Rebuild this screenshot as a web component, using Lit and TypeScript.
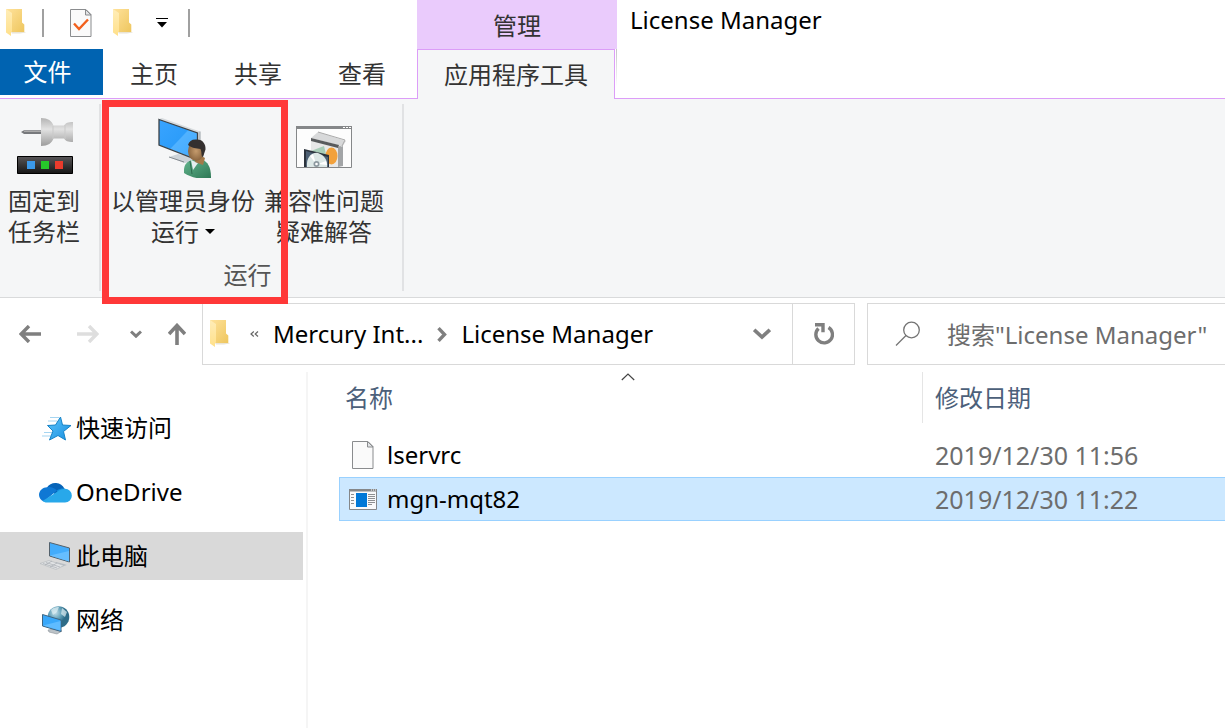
import { LitElement, html, css, svg, nothing } from "lit";
import { customElement, property, state } from "lit/decorators.js";
import { classMap } from "lit/directives/class-map.js";

const folderIcon = html`<svg width="20" height="28" viewBox="0 0 20 28" aria-hidden="true">
  <defs>
    <linearGradient id="fb" x1="0" y1="0" x2="1" y2="1"><stop offset="0" stop-color="#ffe29b"/><stop offset="1" stop-color="#eec65e"/></linearGradient>
    <linearGradient id="ff" x1="0" y1="0" x2="0" y2="1"><stop offset="0" stop-color="#ffedb8"/><stop offset="1" stop-color="#ffe08a"/></linearGradient>
  </defs>
  <path d="M5 23h14l1 .6-6 .8H6z" fill="#e9e4d6"/>
  <path d="M0 0h16v13.500l2.300 2V23H4z" fill="url(#fb)"/>
  <path d="M0 0l6 4v18.500l-1 .8V27L0 23.500z" fill="url(#ff)"/>
</svg>`;

const pageIcon = (checked: boolean) => html`<svg width="22" height="28" viewBox="0 0 22 28" aria-hidden="true">
  <path d="M.5.500h15.500l5 5v22H.5z" fill="#fafafa" stroke="#8a8c8e"/>
  <path d="M15.500.500v5.500H21z" fill="#e2e4e6" stroke="#8a8c8e"/>
  ${checked ? svg`<path d="M4 14.500l5 5.500 9-9.500" fill="none" stroke="#f2601c" stroke-width="2.400"/>` : nothing}
</svg>`;

const customizeIcon = html`<svg width="12" height="10" viewBox="0 0 12 10" aria-hidden="true">
  <path d="M0 .500h12" stroke="#000"/><path d="M1 4h10L6 9.500z" fill="#000"/>
</svg>`;

const pinIcon = html`<svg width="60" height="58" viewBox="-2 0 60 58" aria-hidden="true">
  <defs>
    <linearGradient id="pg" x1="0" y1="0" x2="0" y2="1"><stop offset="0" stop-color="#b4b4b4"/><stop offset=".4" stop-color="#e2e2e2"/><stop offset="1" stop-color="#9c9c9c"/></linearGradient>
    <linearGradient id="pb" x1="0" y1="0" x2="0" y2="1"><stop offset="0" stop-color="#585658"/><stop offset="1" stop-color="#161616"/></linearGradient>
  </defs>
  <path d="M5 14l3-1.800h18v3.800H8z" fill="#77797c"/><path d="M8 13.500h18" stroke="#aaa"/>
  <path d="M25 0c7 0 11 3 12.500 7.500H48C49.500 5 52 4 57 4v20c-5 0-7.500-1-9-3.500H37.500C36 25 32 28 25 28z" fill="url(#pg)"/>
  <path d="M37 8v13M49 7v14" stroke="#c9c9c9"/>
  <path d="M1.500 38.500h55v17h-55z" fill="url(#pb)" stroke="#000"/>
  <path d="M11 43h8v8h-8z" fill="#3b99ea"/><path d="M25 43h8v8h-8z" fill="#26c62a"/><path d="M39 43h8v8h-8z" fill="#ea3b2c"/>
</svg>`;

const adminIcon = html`<svg width="58" height="62" viewBox="-4 -2 58 62" aria-hidden="true">
  <defs>
    <linearGradient id="as" x1="0" y1="0" x2="1" y2="1"><stop offset="0" stop-color="#39a4ff"/><stop offset=".5" stop-color="#2d9dfa"/><stop offset=".52" stop-color="#51b2ff"/><stop offset="1" stop-color="#3fa9ff"/></linearGradient>
    <radialGradient id="ah"><stop offset="0" stop-color="#c59b6d"/><stop offset="1" stop-color="#8b6640"/></radialGradient>
    <linearGradient id="ag" x1="0" y1="0" x2="1" y2="1"><stop offset="0" stop-color="#63b48d"/><stop offset="1" stop-color="#2c7754"/></linearGradient>
  </defs>
  <path d="M11 39l9-3 14 3v5l-8 1z" fill="#cdd3d8"/><path d="M11 39l15 5" stroke="#858b91"/>
  <path d="M1 1l3-1 38 13.500v28L39 43z" fill="#d7dbde"/>
  <path d="M1 1.500L39.500 15v27L1 27z" fill="url(#as)" stroke="#3e4347" stroke-width="1.300"/>
  <path d="M42 13.500v28" stroke="#9aa1a7"/>
  <path d="M26 52c0-6 4-9 8-10h11c4 2 8 6 8 17v1c-9 2-19 0-27-5z" fill="url(#ag)"/>
  <path d="M33 42l2 10 5-7z" fill="#e4eef0"/><path d="M32 43l2 13" stroke="#2c6b4d"/>
  <path d="M37 44l8 3 2-7-7-4z" fill="#a37949"/>
  <ellipse cx="38" cy="33" rx="8" ry="10" fill="url(#ah)"/>
  <path d="M30 27c1-4 4-6 9-5.500 6 0 9 5 8.500 10L45 39c-2 0-1-5-2.500-8-4-.5-9-1-12.500-4z" fill="#34302f"/>
</svg>`;

const troubleshootIcon = html`<svg width="56" height="42" viewBox="0 0 56 42" aria-hidden="true">
  <path d="M.5.500h55v41H.5z" fill="#fdfdfd" stroke="#858789"/><path d="M0 0h56v3H0z" fill="#858789"/>
  <path d="M47 1h2v1h-2zM50 1h2v1h-2zM53 1h2v1h-2z" fill="#fff"/>
  <path d="M15 13l28 7v21H15z" fill="#e8e8e8"/><path d="M42 21l5-3v22l-5 1z" fill="#a3a5a7"/>
  <path d="M15 12l7-6 28 9-4 6-4-2z" fill="#d8d9da"/><path d="M15 12l28 7-1 3-27-7z" fill="#595b5d"/>
  <path d="M22 6l27 8-3 6" fill="none" stroke="#aaa"/>
  <path d="M15 25l13-5 3 12H15z" fill="#a8cdb8"/>
  <ellipse cx="35.500" cy="30" rx="6" ry="8.500" fill="#f2a13c"/>
  <path d="M8 23l25 6v12H8z" fill="#2b333d"/><path d="M10 25l22 6v10H10z" fill="#4d6074"/>
  <path d="M11 41c-1-10 5-15 11-14 6 2 10 7 9 14z" fill="#dde8e7"/>
  <path d="M20 38l-6-8 3-2zM22 38l8-3 1 4z" fill="#fff"/>
  <circle cx="20.500" cy="38" r="3" fill="#8c989f"/><circle cx="20.500" cy="38" r="1.300" fill="#fff"/>
</svg>`;

const dropIcon = html`<svg width="10" height="5" viewBox="0 0 10 5" aria-hidden="true"><path d="M0 0h10L5 5z" fill="#000"/></svg>`;

const arrowIcon = html`<svg width="22" height="18" viewBox="0 0 22 18" fill="none" stroke="currentColor" stroke-width="3.400" aria-hidden="true"><path d="M22 9H2.500M10 1L2.200 9l7.800 8"/></svg>`;
const forwardIcon = html`<svg width="22" height="18" viewBox="0 0 22 18" fill="none" stroke="currentColor" stroke-width="3.400" aria-hidden="true"><path d="M0 9h19.500M12 1l7.800 8-7.800 8"/></svg>`;
const upIcon = html`<svg width="18" height="22" viewBox="0 0 18 22" fill="none" stroke="currentColor" stroke-width="3.600" aria-hidden="true"><path d="M9 22V2.500M1 11l8-8.500 8 8.500"/></svg>`;
const smallChevron = html`<svg width="12" height="8" viewBox="0 0 12 8" fill="none" stroke="currentColor" stroke-width="3" aria-hidden="true"><path d="M1 1.500l5 4.700 5-4.700"/></svg>`;
const chevron = html`<svg width="18" height="12" viewBox="0 0 18 12" fill="none" stroke="currentColor" stroke-width="3.600" aria-hidden="true"><path d="M1.200 1.800L9 9l7.800-7.200"/></svg>`;
const crumbChevron = html`<svg width="10" height="15" viewBox="0 0 10 15" fill="none" stroke="#7f7f7f" stroke-width="3.400" aria-hidden="true"><path d="M1.500 1.200l6 6.300-6 6.300"/></svg>`;
const moreIcon = html`<svg width="9" height="6" viewBox="0 0 9 6" fill="none" stroke="#666" stroke-width="1.200" aria-hidden="true"><path d="M3.800.500L1 3l2.800 2.500M8 .500L5.200 3 8 5.500"/></svg>`;
const refreshIcon = html`<svg width="20" height="22" viewBox="0 0 20 22" fill="none" stroke="currentColor" aria-hidden="true"><path d="M14.500 4.500A8.300 8.300 0 1 1 4.500 5.500" stroke-width="3.400"/><path d="M1 1.800h8v7.500" stroke-width="3.400"/></svg>`;
const searchIcon = html`<svg width="26" height="26" viewBox="0 0 26 26" fill="none" stroke="#747474" stroke-width="1.300" aria-hidden="true"><circle cx="16.500" cy="9" r="7.800"/><path d="M11 14.500L1 24.500"/></svg>`;
const sortIcon = html`<svg width="14" height="8" viewBox="0 0 14 8" fill="none" stroke="#444" stroke-width="1.200" aria-hidden="true"><path d="M.8 7L7 1l6.200 6"/></svg>`;

const starIcon = html`<svg width="34" height="28" viewBox="0 0 34 28" aria-hidden="true">
  <defs><linearGradient id="sg" x1="0" y1="0" x2="1" y2="1"><stop offset="0" stop-color="#5cc4fb"/><stop offset="1" stop-color="#188fe0"/></linearGradient></defs>
  <path d="M12 3.500h9M10 7h9M6 18.500h9M4 22h9" stroke="#a5d5f1"/>
  <path d="M22.500 3l2 8 8.500.5-7.500 6 2 8.500-7.500-4.500-8.500 4.500 3.500-9L9.500 11.500l8-.5z" fill="url(#sg)" stroke="#1683c7"/>
</svg>`;
const cloudIcon = html`<svg width="34" height="22" viewBox="0 0 34 22" aria-hidden="true">
  <path d="M9 6.500a10 10 0 0 1 17.500 1.200L19 15z" fill="#0764b8"/>
  <path d="M9 6.200c4-.8 7 .8 10 3.300l-13 11A7.300 7.300 0 0 1 1 14c0-4.500 4-7.800 8-7.800z" fill="#0f78d4"/>
  <path d="M19 9.500c2.500-2 5-2.200 7.500-2l2 4L20 13z" fill="#1490df"/>
  <path d="M4.500 20l15.500-9.800c2-1.300 5-2.500 7-2.400A6.600 6.600 0 0 1 27 21.500H9c-2 0-3.500-.6-4.500-1.500z" fill="#28a8ea"/>
</svg>`;
const pcIcon = html`<svg width="34" height="30" viewBox="0 0 34 30" aria-hidden="true">
  <path d="M18 21l8 2 3 1-6 2-7-3z" fill="#b8bec4"/>
  <path d="M11.500 1.500L31.500 7v14L11.500 15z" fill="#43acfb" stroke="#53616c"/>
  <path d="M12 14.500L31 10v10.500z" fill="#66beff"/>
  <path d="M2 22.500l9-3 15 5-8 4z" fill="#e1e3e5" stroke="#b2b7bb" stroke-width=".6"/>
  <path d="M5 22.500l14 4.500M8 21.500l14 4.500M7 24l7-4M12 26l7-4" stroke="#a9aeb3" stroke-width=".7"/>
</svg>`;
const networkIcon = html`<svg width="34" height="30" viewBox="0 0 34 30" aria-hidden="true">
  <defs><radialGradient id="ng" cx=".35" cy=".3"><stop offset="0" stop-color="#c4e0ea"/><stop offset=".6" stop-color="#62a0b8"/><stop offset="1" stop-color="#2e6c88"/></radialGradient></defs>
  <circle cx="20.500" cy="12" r="10.800" fill="url(#ng)"/>
  <path d="M13 5c3-3 6-3 8-3l-2 5-4 3zM24 3l5 4-2 5-4-3z" fill="#e0f0f4" opacity=".7"/>
  <path d="M10 25l6-1 8 2-5 3-8-2z" fill="#bcc3c8" stroke="#8b9298" stroke-width=".6"/>
  <path d="M4.500 9.500L23 15v11.500L4.500 21z" fill="#39a8fa" stroke="#3f6682"/>
  <path d="M5.200 20.500L22.500 16v9.500z" fill="#5fbcff"/>
</svg>`;
const appIcon = html`<svg width="28" height="21" viewBox="0 0 28 21" aria-hidden="true">
  <path d="M.5.500h27v20H.5z" fill="#f8f9fa" stroke="#858789"/><path d="M0 0h28v2.500H0z" fill="#858789"/>
  <path d="M22 1h1M24 1h1M26 1h1" stroke="#fff"/>
  <path d="M2 5.500h3M2 8.500h3M2 11.500h3M2 14.500h3M19 5.500h7M19 7.500h7M19 9.500h7M19 11.500h7M19 13.500h7M19 15.500h4" stroke="#8d8f91"/>
  <path d="M7 4h11v14H7z" fill="#0078d7"/>
</svg>`;

const shared = css`
  :host { display: block; font-family: "Noto Sans", "Noto Sans CJK SC", sans-serif; font-size: 24px; line-height: 32px; color: #000; }
  *, *::before { box-sizing: border-box; }
  button { font: inherit; color: inherit; background: none; border: 0; padding: 0; margin: 0; display: flex; align-items: center; justify-content: center; white-space: nowrap; }
  svg { display: block; flex: none; }
`;

@customElement("title-bar")
export class TitleBar extends LitElement {
  static styles = [shared, css`
    .bar { display: flex; height: 49px; }
    .quick { display: flex; align-items: center; flex: 0 0 417px; height: 45px; padding-left: 6px; }
    .sep { width: 2px; height: 28px; background: #a0a0a0; }
    .after-folder { margin: 0 16px; }
    .before-end { margin-left: 8px; }
    .tool { width: 42px; height: 40px; }
    .tool.narrow { width: 36px; }
    .context { flex: 0 0 200px; padding-top: 2px; background: #eacbfc; color: #333; display: flex; align-items: center; justify-content: center; }
    .title { margin: 0; padding: 4px 13px; font-size: 24px; font-weight: 400; }
  `];
  render() {
    return html`<header class="bar">
      <div class="quick">
        ${folderIcon}<span class="sep after-folder"></span>
        <button class="tool" aria-label="属性">${pageIcon(true)}</button>
        <button class="tool" aria-label="新建文件夹">${folderIcon}</button>
        <button class="tool narrow" aria-label="自定义快速访问工具栏">${customizeIcon}</button>
        <span class="sep before-end"></span>
      </div>
      <div class="context">管理</div>
      <h1 class="title">License Manager</h1>
    </header>`;
  }
}

@customElement("ribbon-bar")
export class RibbonBar extends LitElement {
  static styles = [shared, css`
    .tabs { display: flex; height: 50px; color: #333; border-bottom: 1px solid #dc9df8; }
    .tab { width: 104px; height: 49px; padding-right: 2px; }
    .tab.file { width: 103px; height: 46px; background: #0063b1; color: #fff; padding-right: 8px; }
    .tab.active { width: 198px; height: 50px; margin-left: 2px; padding: 0; background: #f5f6f7; border: 1px solid #dc9df8; border-bottom: 0; }
    .edge { width: 1px; height: 38px; margin-left: 1px; background: linear-gradient(#c4c4c4, #fff); }
    .ribbon { position: relative; display: flex; height: 199px; padding-top: 5px; background: #f5f6f7; border-bottom: 1px solid #d9dadb; color: #333; }
    .group { display: flex; flex-direction: column; height: 187px; border-right: 2px solid #e1e2e4; }
    .items { display: flex; gap: 9px; flex: 1; }
    .pin { padding: 0 19px 0 8px; }
    .run { padding: 0 18px 0 10px; }
    .command { display: grid; grid-template-rows: 81px auto; align-content: start; justify-items: center; align-items: center; line-height: 31px; }
    .command > svg { margin-top: 5px; }
    .second { display: flex; align-items: center; justify-content: center; gap: 6px; }
    .caption { height: 32px; text-align: center; color: #555; }
    .highlight { position: absolute; left: 102px; top: 1px; width: 186px; height: 204px; border: 7px solid #ff3838; pointer-events: none; z-index: 1; }
  `];
  render() {
    return html`
      <nav class="tabs">
        <button class="tab file">文件</button>
        <button class="tab">主页</button>
        <button class="tab">共享</button>
        <button class="tab">查看</button>
        <button class="tab active">应用程序工具</button>
        <span class="edge"></span>
      </nav>
      <section class="ribbon">
        <div class="group pin">
          <div class="items">
            <button class="command">${pinIcon}<span>固定到<span class="second">任务栏</span></span></button>
          </div>
        </div>
        <div class="group run">
          <div class="items">
            <button class="command">${adminIcon}<span>以管理员身份<span class="second">运行${dropIcon}</span></span></button>
            <button class="command">${troubleshootIcon}<span>兼容性问题<span class="second">疑难解答</span></span></button>
          </div>
          <div class="caption">运行</div>
        </div>
        <div class="highlight"></div>
      </section>`;
  }
}

@customElement("address-row")
export class AddressRow extends LitElement {
  static styles = [shared, css`
    .row { display: flex; padding: 5px 0 7px; color: #7f7f7f; }
    .nav { display: flex; flex: 0 0 202px; }
    .back { width: 60px; }
    .forward { width: 56px; color: #dedede; }
    .recent { width: 40px; }
    .up { width: 42px; }
    .address { display: flex; flex: 1; height: 62px; min-width: 0; border: 1px solid #d9d9d9; }
    .crumbs { display: flex; align-items: center; flex: 1; min-width: 0; gap: 14px; padding-left: 7px; color: #000; }
    .more { padding-left: 6px; }
    .list { width: 60px; }
    .refresh { width: 62px; border-left: 1px solid #d9d9d9; }
    .search { display: flex; align-items: center; flex: 0 0 358px; min-width: 0; height: 62px; margin-left: 12px; padding-left: 27px; gap: 26px; border: 1px solid #d9d9d9; border-right: 0; }
    .search input { flex: 1; width: 100%; min-width: 0; height: 40px; padding: 0; border: 0; outline: 0; background: none; font: inherit; color: #000; }
    .search input::placeholder { color: #6d6d6d; opacity: 1; }
  `];
  render() {
    return html`<div class="row">
      <nav class="nav">
        <button class="back" aria-label="后退">${arrowIcon}</button>
        <button class="forward" aria-label="前进" disabled>${forwardIcon}</button>
        <button class="recent" aria-label="最近浏览的位置">${smallChevron}</button>
        <button class="up" aria-label="向上">${upIcon}</button>
      </nav>
      <div class="address">
        <div class="crumbs">
          ${folderIcon}
          <button class="more" aria-label="上级文件夹">${moreIcon}</button>
          <button>Mercury Int...</button>
          ${crumbChevron}
          <button>License Manager</button>
        </div>
        <button class="list" aria-label="以前的位置">${chevron}</button>
        <button class="refresh" aria-label="刷新">${refreshIcon}</button>
      </div>
      <label class="search">${searchIcon}<input type="text" aria-label="搜索" placeholder='搜索"License Manager"'></label>
    </div>`;
  }
}

@customElement("side-nav")
export class SideNav extends LitElement {
  @state() current = "此电脑";
  static styles = [shared, css`
    .list { display: flex; flex-direction: column; gap: 16px; padding: 32px 3px 0 0; border-right: 2px solid #f5f5f5; height: 100%; }
    .item { display: flex; align-items: center; gap: 4px; height: 48px; padding-left: 38px; color: #000; text-decoration: none; }
    .item.current { background: #d9d9d9; }
  `];
  render() {
    const items = [["快速访问", starIcon], ["OneDrive", cloudIcon], ["此电脑", pcIcon], ["网络", networkIcon]] as const;
    return html`<nav class="list">${items.map(([name, icon]) => html`
      <a href="#" class=${classMap({ item: true, current: name === this.current })}
        @click=${(e: Event) => { e.preventDefault(); this.current = name; }}>${icon}<span>${name}</span></a>`)}
    </nav>`;
  }
}

@customElement("file-list")
export class FileList extends LitElement {
  @property() selected = "mgn-mqt82";
  static styles = [shared, css`
    table { width: 100%; table-layout: fixed; border-collapse: separate; border-spacing: 0; }
    .name-col { width: 584px; }
    th { position: relative; height: 51px; padding: 0 0 0 12px; text-align: left; font-weight: 400; color: #4c607a; }
    th:first-child { padding-left: 6px; border-right: 1px solid #e5e5e5; }
    .sort { position: absolute; top: 1px; left: 0; width: calc(100% - 6px); display: flex; justify-content: center; }
    .space td { height: 10px; padding: 0; }
    td { height: 44px; padding: 0 0 0 12px; border: 1px solid transparent; border-width: 1px 0; font-size: 25px; color: #6d6d6d; white-space: nowrap; }
    .file { border-left-width: 1px; padding-left: 9px; font-size: 24px; color: #000; }
    .entry { display: flex; align-items: center; gap: 10px; }
    .icon { display: flex; justify-content: center; width: 28px; }
    .selected td { background: #cce8ff; border-color: #99d1ff; }
  `];
  render() {
    const files = [
      { name: "lservrc", date: "2019/12/30 11:56", icon: pageIcon(false) },
      { name: "mgn-mqt82", date: "2019/12/30 11:22", icon: appIcon },
    ];
    return html`<table>
      <colgroup><col class="name-col"><col></colgroup>
      <thead><tr><th scope="col">名称<span class="sort">${sortIcon}</span></th><th scope="col">修改日期</th></tr></thead>
      <tbody>
        <tr class="space" aria-hidden="true"><td colspan="2"></td></tr>
        ${files.map((f) => html`<tr class=${classMap({ selected: f.name === this.selected })} @click=${() => (this.selected = f.name)}>
          <td class="file"><span class="entry"><span class="icon">${f.icon}</span>${f.name}</span></td>
          <td>${f.date}</td>
        </tr>`)}
      </tbody>
    </table>`;
  }
}

@customElement("app-root")
export class AppRoot extends LitElement {
  static styles = css`
    :host { display: flex; flex-direction: column; min-height: 100vh; background: #fff; overflow: hidden; }
    .body { display: flex; flex: 1; }
    .side { flex: 0 0 308px; }
    .files { flex: 1; min-width: 0; margin-left: 31px; }
  `;
  render() {
    return html`
      <title-bar></title-bar>
      <ribbon-bar></ribbon-bar>
      <address-row></address-row>
      <main class="body">
        <side-nav class="side"></side-nav>
        <file-list class="files"></file-list>
      </main>`;
  }
}
